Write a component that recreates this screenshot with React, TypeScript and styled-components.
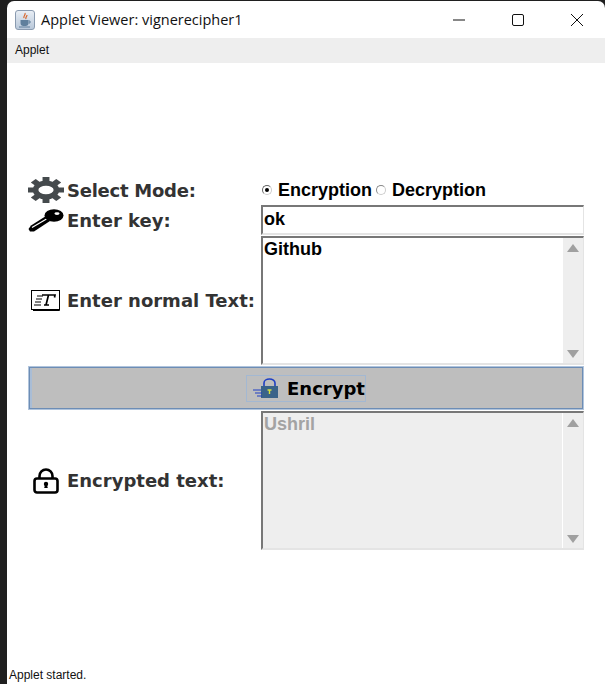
import React from 'react'
import styled, { createGlobalStyle } from 'styled-components'

const GlobalStyle = createGlobalStyle`
  html, body {
    margin: 0;
    padding: 0;
    width: 605px;
    height: 684px;
    overflow: hidden;
    background: #1f1f1f;
  }
`

const Screen = styled.div`
  width: 605px;
  height: 684px;
  padding: 1px 0 0 7px;
  box-sizing: border-box;
  background: #1f1f1f;
`

const Window = styled.div`
  height: 683px;
  display: flex;
  flex-direction: column;
  background: #fff;
  border-top-left-radius: 7px;
  border-top-right-radius: 7px;
  overflow: hidden;
  font-family: 'Liberation Sans', Arial, sans-serif;
`

const TitleBar = styled.div`
  height: 37px;
  flex: none;
  display: flex;
  align-items: center;
  padding-left: 8px;
`

const AppIcon = styled.div`
  width: 20px;
  height: 20px;
  flex: none;
  box-sizing: border-box;
  border: 1px solid #8a9bb0;
  border-radius: 3px;
  background: linear-gradient(#e8eef5, #b9c8da);
  display: flex;
  align-items: center;
  justify-content: center;
`

const TitleText = styled.span`
  margin-left: 6px;
  font-family: 'Open Sans', 'Noto Sans', sans-serif;
  font-size: 14.5px;
  color: #111;
  flex: 1;
`

const WindowButton = styled.div`
  width: 59px;
  height: 37px;
  box-sizing: border-box;
  padding-left: 2px;
  display: flex;
  align-items: center;
  justify-content: center;
`

const MenuBar = styled.div`
  height: 25px;
  flex: none;
  box-sizing: border-box;
  padding: 0 0 2px 8px;
  background: #eeeeee;
  display: flex;
  align-items: center;
  font-size: 12px;
  color: #111;
`

const Form = styled.div`
  flex: 1;
  display: grid;
  grid-template-columns: 232px 323px;
  grid-template-rows: 30px 31px 129px 46px 139px;
  align-content: start;
  padding: 112px 0 0 22px;
`

const Label = styled.div<{ $tight?: boolean }>`
  display: flex;
  align-items: center;
  gap: 3px;
  font-family: 'DejaVu Sans', Verdana, sans-serif;
  font-weight: 700;
  font-size: 18px;
  letter-spacing: ${({ $tight }) => ($tight ? '-0.25px' : '0')};
  color: #333;
  white-space: nowrap;
`

const IconSlot = styled.div`
  width: 36px;
  margin-left: -1px;
  flex: none;
  display: flex;
  justify-content: center;
  align-items: center;
`

const RadioRow = styled.div`
  display: flex;
  align-items: center;
  padding-left: 1px;
  font-size: 18px;
  font-weight: 700;
  color: #000;
`

const Radio = styled.span<{ $checked?: boolean }>`
  width: 10px;
  height: 10px;
  box-sizing: border-box;
  border-radius: 50%;
  border: 1px solid ${({ $checked }) => ($checked ? '#666' : '#888')};
  border-right-color: #ccc;
  border-bottom-color: #ccc;
  margin-right: 6px;
  display: flex;
  align-items: center;
  justify-content: center;
  &::after {
    content: '';
    width: 4px;
    height: 4px;
    border-radius: 50%;
    background: ${({ $checked }) => ($checked ? '#000' : 'transparent')};
  }
`

const RadioOption = styled.label`
  display: flex;
  align-items: center;
  margin-right: 4px;
`

const Bevel = styled.div<{ $disabled?: boolean }>`
  box-sizing: border-box;
  border: 2px solid #e4e4e4;
  border-right-width: 1px;
  border-top-color: #777;
  border-left-color: #777;
  background: ${({ $disabled }) => ($disabled ? '#eeeeee' : '#fff')};
  color: ${({ $disabled }) => ($disabled ? '#a3a3a3' : '#000')};
  font-size: 18px;
  font-weight: 700;
`

const KeyInput = styled(Bevel)`
  height: 30px;
  margin-bottom: 1px;
  align-self: end;
  padding: 1px 1px;
  line-height: 22px;
`

const TextArea = styled(Bevel)`
  display: flex;
  justify-content: space-between;
`

const AreaText = styled.div`
  padding: 0 1px;
  line-height: 22px;
`

const ScrollBar = styled.div<{ $disabled?: boolean }>`
  width: 20px;
  flex: none;
  background: #eeeeee;
  border-left: ${({ $disabled }) => ($disabled ? '1px solid #fff' : '0')};
  display: flex;
  flex-direction: column;
  justify-content: space-between;
  align-items: center;
  padding: 6px 0 5px;
`

const Arrow = styled.span<{ $down?: boolean }>`
  width: 0;
  height: 0;
  border-left: 6px solid transparent;
  border-right: 6px solid transparent;
  ${({ $down }) =>
    $down ? 'border-top: 8px solid #a0a0a0;' : 'border-bottom: 8px solid #a0a0a0;'}
`

const ButtonRow = styled.div`
  grid-column: 1 / 3;
  padding: 1px 0;
`

const EncryptButton = styled.div`
  box-sizing: border-box;
  height: 44px;
  width: 556px;
  margin-left: -1px;
  background: #bebebe;
  border: 1px solid #b0c4dc;
  box-shadow: inset 0 0 0 1px #6d8db5, inset 2px 0 0 1px #a9bdd6;
  display: flex;
  align-items: center;
  justify-content: center;
`

const ButtonFace = styled.div`
  height: 27px;
  box-sizing: border-box;
  display: flex;
  align-items: center;
  gap: 7px;
  padding: 0 0 0 5px;
  border: 1px solid #a3b8d2;
  font-family: 'DejaVu Sans', Verdana, sans-serif;
  font-weight: 700;
  font-size: 18px;
  color: #000;
`

const StatusBar = styled.div`
  height: 20px;
  flex: none;
  box-sizing: border-box;
  padding: 2px 0 0 2px;
  display: flex;
  align-items: center;
  font-size: 12px;
  color: #111;
`

const JavaIcon = () => (
  <svg width="14" height="16" viewBox="0 0 14 16">
    <path d="M7 1c1 2-2 3-1 5M9 3c0 2-2 2-1 4" stroke="#d9652a" strokeWidth="1.2" fill="none" />
    <path d="M2.5 8h8v3a3 3 0 0 1-3 3h-2a3 3 0 0 1-3-3z" fill="#5f7f9c" />
    <path d="M10.5 9h1.5v2h-1.5" stroke="#5f7f9c" fill="none" />
    <path d="M1 15h11" stroke="#5f7f9c" />
  </svg>
)

// the reference gear is stretched sideways, so it is drawn round and scaled
const GearIcon = () => (
  <svg width="36" height="26" viewBox="0 0 26 26" preserveAspectRatio="none">
    <g fill="#454a4d">
      {[0, 45, 90, 135, 180, 225, 270, 315].map((a) => (
        <rect key={a} x="10.5" y="0" width="5" height="7" transform={`rotate(${a} 13 13)`} />
      ))}
    </g>
    <path
      fill="#454a4d"
      fillRule="evenodd"
      d="M3.5 13a9.5 9.5 0 1 0 19 0a9.5 9.5 0 1 0-19 0zM7.5 13a5.5 4.2 0 1 0 11 0a5.5 4.2 0 1 0-11 0z"
    />
  </svg>
)

const KeyIcon = () => (
  <svg width="36" height="23" viewBox="0 0 36 23">
    <path d="M0.5 20 3 16.5 18 7l4 5L6 22.5H2z" fill="#000" />
    <path d="M4 18.5 18.5 10" stroke="#fff" strokeWidth="1.2" />
    <ellipse cx="26" cy="6.5" rx="9.5" ry="6.2" fill="#000" />
    <ellipse cx="29" cy="4.6" rx="2.6" ry="1.3" fill="#fff" />
  </svg>
)

const TextIcon = () => (
  <svg width="30" height="21" viewBox="0 0 30 21">
    <rect x="0.5" y="0.5" width="28" height="19" fill="#fff" stroke="#000" />
    <path d="M28.5 2v18.5H2" stroke="#000" fill="none" />
    <path d="M6 6h6M5 9h6M4 12h6M3 15h7" stroke="#000" />
    <path d="M11 5h13l-.5 2.5M17.5 5l-2.5 10M13 15h5" stroke="#000" strokeWidth="1.7" fill="none" />
  </svg>
)

const LockIcon = () => (
  <svg width="26" height="26" viewBox="0 0 26 26">
    <path d="M6.5 11V8a6.5 6.5 0 0 1 13 0v3" fill="none" stroke="#000" strokeWidth="2.6" />
    <rect x="1.5" y="10.5" width="23" height="14" rx="2.5" fill="#fff" stroke="#000" strokeWidth="2.6" />
    <circle cx="13" cy="16" r="2.2" fill="#000" />
    <path d="M12 17h2l.8 3h-3.6z" fill="#000" />
  </svg>
)

const EncryptIcon = () => (
  <svg width="28" height="21" viewBox="0 0 28 21">
    <rect x="9" y="8" width="17" height="12" fill="#3a6389" />
    <path d="M12 8V5a5.5 4 0 0 1 11 0v3" fill="none" stroke="#1f3fc4" strokeWidth="1.6" />
    <path d="M1 12h8M3 15h7M5 18h5" stroke="#1f3fc4" />
    <path d="M15.5 12h4M17.5 12v4" stroke="#d8e23c" strokeWidth="1.4" />
  </svg>
)

export default function App() {
  return (
    <Screen>
      <GlobalStyle />
      <Window>
        <TitleBar>
          <AppIcon>
            <JavaIcon />
          </AppIcon>
          <TitleText>Applet Viewer: vignerecipher1</TitleText>
          <WindowButton>
            <svg width="12" height="2" viewBox="0 0 12 2">
              <path d="M0 1h12" stroke="#111" />
            </svg>
          </WindowButton>
          <WindowButton>
            <svg width="12" height="12" viewBox="0 0 12 12">
              <rect x="0.5" y="0.5" width="11" height="11" rx="1.5" fill="none" stroke="#111" />
            </svg>
          </WindowButton>
          <WindowButton>
            <svg width="12" height="12" viewBox="0 0 12 12">
              <path d="M0 0l12 12M12 0L0 12" stroke="#111" />
            </svg>
          </WindowButton>
        </TitleBar>
        <MenuBar>Applet</MenuBar>
        <Form>
          <Label $tight>
            <IconSlot>
              <GearIcon />
            </IconSlot>
            Select Mode:
          </Label>
          <RadioRow>
            <RadioOption>
              <Radio $checked />
              Encryption
            </RadioOption>
            <RadioOption>
              <Radio />
              Decryption
            </RadioOption>
          </RadioRow>
          <Label>
            <IconSlot>
              <KeyIcon />
            </IconSlot>
            Enter key:
          </Label>
          <KeyInput>ok</KeyInput>
          <Label>
            <IconSlot>
              <TextIcon />
            </IconSlot>
            Enter normal Text:
          </Label>
          <TextArea>
            <AreaText>Github</AreaText>
            <ScrollBar>
              <Arrow />
              <Arrow $down />
            </ScrollBar>
          </TextArea>
          <ButtonRow>
            <EncryptButton>
              <ButtonFace>
                <EncryptIcon />
                Encrypt
              </ButtonFace>
            </EncryptButton>
          </ButtonRow>
          <Label>
            <IconSlot>
              <LockIcon />
            </IconSlot>
            Encrypted text:
          </Label>
          <TextArea $disabled>
            <AreaText>Ushril</AreaText>
            <ScrollBar $disabled>
              <Arrow />
              <Arrow $down />
            </ScrollBar>
          </TextArea>
        </Form>
        <StatusBar>Applet started.</StatusBar>
      </Window>
    </Screen>
  )
}
